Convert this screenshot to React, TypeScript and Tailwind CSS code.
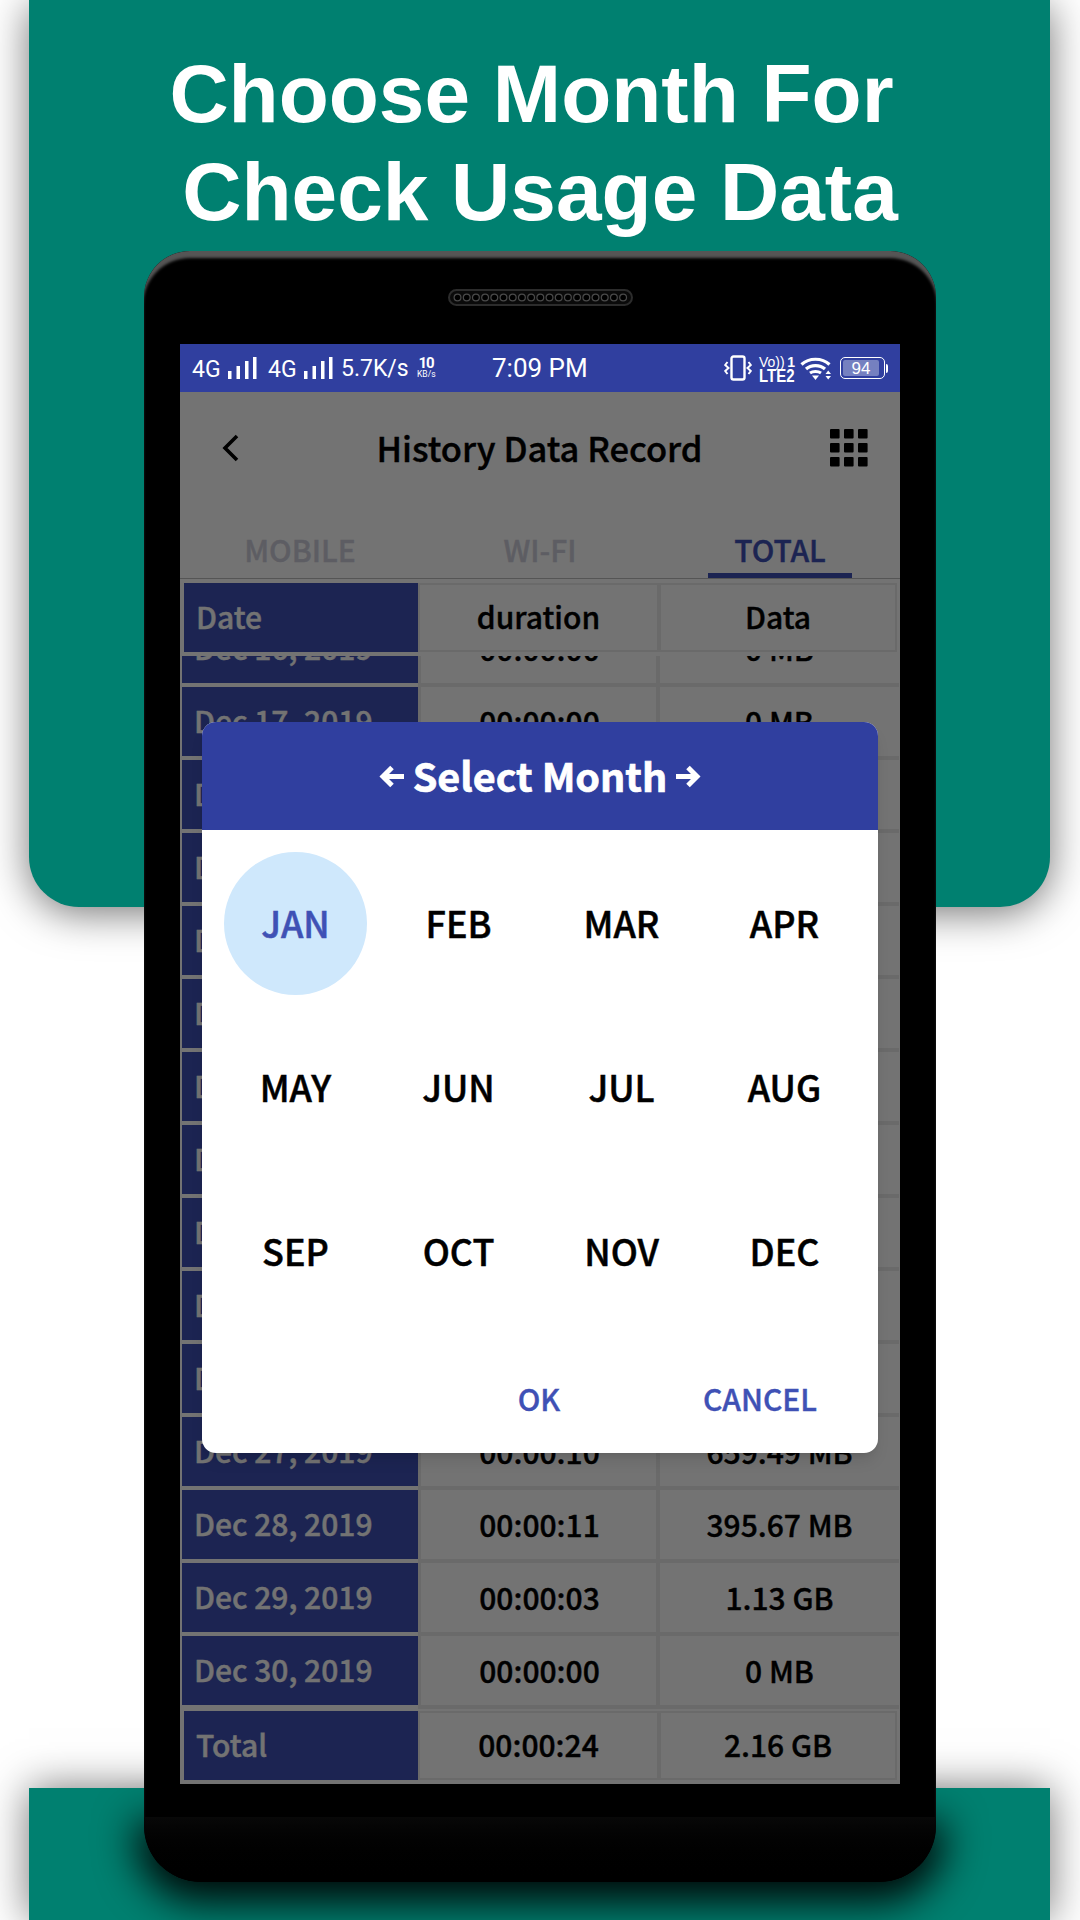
const dates = [16, 17, 18, 19, 20, 21, 22, 23, 24, 25, 26, 27, 28, 29, 30];

const rows: Record<number, [string, string]> = {
  27: ["00:00:10", "659.49 MB"],
  28: ["00:00:11", "395.67 MB"],
  29: ["00:00:03", "1.13 GB"],
};

const months = ["JAN", "FEB", "MAR", "APR", "MAY", "JUN", "JUL", "AUG", "SEP", "OCT", "NOV", "DEC"];

const cjk = "[font-family:'Noto_Sans_CJK_SC','Noto_Sans',sans-serif]";

function Bars() {
  return (
    <svg width="29" height="24" viewBox="0 0 29 24" fill="white">
      <rect x="0" y="15" width="3.5" height="8" />
      <rect x="8.5" y="10" width="3.5" height="13" />
      <rect x="17" y="5" width="3.5" height="18" />
      <rect x="25" y="1" width="3.5" height="22" />
    </svg>
  );
}

function StatusBar() {
  return (
    <div className="flex h-12 items-center bg-[#303f9f] pl-3 pr-3 font-['Roboto',sans-serif] text-white">
      <span className="w-[36px] pt-[3px] text-[23px] leading-none">4G</span>
      <Bars />
      <span className="ml-[11px] w-[36px] pt-[3px] text-[23px] leading-none">4G</span>
      <Bars />
      <span className="ml-[8px] w-[76px] text-[23px] leading-none">5.7K/s</span>
      <div className="flex w-[75px] flex-col items-start">
        <span className="w-[18px] text-center text-[15px] font-bold leading-[13px] tracking-[-1px]">10</span>
        <span className="w-[18px] whitespace-nowrap text-[8.5px] leading-[9px]">KB/s</span>
      </div>
      <span className="text-[26px] leading-none">7:09 PM</span>
      <div className="ml-auto flex items-center">
        <svg width="28" height="26" viewBox="0 0 28 26" fill="none" stroke="white" strokeWidth="2.4">
          <rect x="7.5" y="1.5" width="13" height="23" rx="2" />
          <path d="M3.5 7 L1.2 10 L4.5 13 L1.2 16 L3.5 19 M24.5 7 L26.8 10 L23.5 13 L26.8 16 L24.5 19" strokeWidth="2" />
        </svg>
        <div className="ml-[7px] flex w-[36px] flex-col font-['Liberation_Sans',sans-serif] leading-none">
          <span className="flex justify-between text-[14px] leading-[12px]">
            <span>Vo))</span>
            <span className="font-bold">1</span>
          </span>
          <span className="origin-top scale-y-[1.2] whitespace-nowrap text-[15px] font-bold leading-[13px]">LTE2</span>
        </div>
        <svg className="ml-[5px]" width="32" height="23" viewBox="0 0 32 23" fill="none" stroke="white" strokeWidth="3.2">
          <path d="M1.5 7.5 C9 0.5 22 0.5 29.5 7.5" />
          <path d="M6 12 C11 7.5 20 7.5 25 12" />
          <path d="M10 16 C13 14 18 14 21 16" />
          <path d="M12 18.5 L19 18.5 L15.5 23 Z" fill="white" stroke="none" />
          <path d="M25.5 17 L31 17 L28.2 13.5 Z M25.5 19 L31 19 L28.2 22.5 Z" fill="white" stroke="none" />
        </svg>
        <div className="ml-[8px] flex items-center">
          <div className="flex h-[22px] w-[45px] items-center rounded-[5px] border-[1.5px] border-white p-[2px]">
            <div className="flex h-full w-[36px] items-center justify-center rounded-[2px] bg-[#7580c0] font-['Liberation_Sans',sans-serif] text-[17px] leading-none">
              94
            </div>
          </div>
          <div className="ml-[1px] h-[9px] w-[2px] rounded-r-sm bg-white" />
        </div>
      </div>
    </div>
  );
}

function AppBar() {
  return (
    <div className="flex h-[112px] items-center justify-between pl-[42px] pr-[32px]">
      <svg width="17" height="28" viewBox="0 0 17 28" fill="none" stroke="black" strokeWidth="3.6">
        <path d="M15 2 L3 14 L15 26" />
      </svg>
      <span className="ml-[10px] pb-[2px] text-[34.5px] font-medium leading-none text-black [-webkit-text-stroke:0.4px_black]">History Data Record</span>
      <svg width="38" height="38" viewBox="0 0 38 38" fill="black">
        {[0, 14, 28].map((y) =>
          [0, 14, 28].map((x) => <rect key={`${x}-${y}`} x={x} y={y} width="9.6" height="9.6" rx="1" />),
        )}
      </svg>
    </div>
  );
}

function Tabs() {
  return (
    <div className="flex h-[75px] border-b border-[#bdbdbd]">
      <div className="flex w-[240px] items-start justify-center pt-[23px] text-[30px] font-medium leading-[44px] text-[#cfcfdb] [-webkit-text-stroke:0.4px_#cfcfdb]">MOBILE</div>
      <div className="flex w-[240px] items-start justify-center pt-[23px] text-[30px] font-medium leading-[44px] text-[#cfcfdb] [-webkit-text-stroke:0.4px_#cfcfdb]">WI-FI</div>
      <div className="flex w-[240px] justify-center">
        <div className="flex h-[74px] w-[144px] items-start justify-center border-b-[5px] border-[#3f51b5] pt-[23px] text-[30px] font-medium leading-[44px] text-[#3f51b5] [-webkit-text-stroke:0.4px_#3f51b5]">
          TOTAL
        </div>
      </div>
    </div>
  );
}

function DataRow({ date, time, data }: { date: string; time: string; data: string }) {
  return (
    <div className="ml-[2px] flex h-[73px] text-[30px] font-medium leading-none [-webkit-text-stroke:0.4px]">
      <div className="mb-[4px] flex w-[236px] items-center bg-[#3f51b5] pb-[3px] pl-[12px] text-white">{date}</div>
      <div className="flex w-[241px] items-center justify-center border-b-4 border-l-[3px] border-r-[3px] border-[#ececec] pb-[1px] pl-[2px] text-black">{time}</div>
      <div className="flex w-[240px] items-center justify-center border-b-4 border-l-[1px] border-[#ececec] pb-[1px] text-black">{data}</div>
    </div>
  );
}

function PinnedRow({ first, second, third, className }: { first: string; second: string; third: string; className: string }) {
  return (
    <div className={`ml-[4px] flex h-[69px] text-[30px] font-medium leading-none [-webkit-text-stroke:0.4px] ${className}`}>
      <div className="flex w-[234px] items-center bg-[#3f51b5] pb-[3px] pl-[12px] text-white">{first}</div>
      <div className="flex w-[241px] items-center justify-center border-2 border-[#ececec] pb-[3px] text-black">{second}</div>
      <div className="flex w-[238px] items-center justify-center border-2 border-[#ececec] pb-[3px] text-black">{third}</div>
    </div>
  );
}

function MonthDialog() {
  return (
    <div className="absolute left-[22px] top-[330px] flex h-[731px] w-[676px] flex-col overflow-hidden rounded-[14px] bg-white shadow-lg">
      <div className="flex h-[108px] items-center justify-center gap-[9px] bg-[#303f9f] text-[39.5px] font-bold leading-none text-white [-webkit-text-stroke:0.7px_white]">
        <svg width="25" height="23" viewBox="0 0 25 23" fill="none" stroke="white" strokeWidth="5">
          <path d="M13 2.5 L4 11.5 L13 20.5 M4 11.5 H25" />
        </svg>
        <span className="pb-[2px]">Select Month</span>
        <svg width="25" height="23" viewBox="0 0 25 23" fill="none" stroke="white" strokeWidth="5">
          <path d="M12 2.5 L21 11.5 L12 20.5 M21 11.5 H0" />
        </svg>
      </div>
      <div className="grid grid-cols-4 px-[12px] pt-[11px]">
        {months.map((m) => (
          <div key={m} className="flex h-[164px] items-center justify-center">
            <div
              className={
                m === "JAN"
                  ? "flex h-[143px] w-[143px] items-center justify-center rounded-full bg-[#cfe8fc] pb-[2px] text-[36px] font-medium text-[#3f51b5] [-webkit-text-stroke:0.5px_#3f51b5]"
                  : "flex h-[143px] w-[143px] items-center justify-center pb-[2px] text-[36px] font-medium text-black [-webkit-text-stroke:0.5px_black]"
              }
            >
              {m}
            </div>
          </div>
        ))}
      </div>
      <div className="flex items-center pt-[50px] text-[30px] font-medium leading-none text-[#3f51b5] [-webkit-text-stroke:0.4px_#3f51b5]">
        <span className="ml-[312px] w-[50px] text-center">OK</span>
        <span className="ml-[138px] w-[116px] text-center">CANCEL</span>
      </div>
    </div>
  );
}

export default function App() {
  return (
    <div className="relative flex h-[1920px] w-[1080px] flex-col items-center overflow-hidden bg-white">
      <div className="absolute left-[29px] top-0 h-[907px] w-[1021px] rounded-b-[50px] bg-[#008070] shadow-[0_6px_40px_rgba(0,0,0,0.55)]" />
      <div className="absolute left-[29px] top-[1788px] h-[132px] w-[1021px] bg-[#008070] shadow-[0_0_40px_rgba(0,0,0,0.55)]" />

      <div className="relative flex h-[251px] w-full flex-col items-center pt-[45px] font-['Liberation_Sans',sans-serif] text-[82px] font-bold leading-[98px] text-white">
        <div className="pr-[17px]">Choose Month For</div>
        <div>Check Usage Data</div>
      </div>

      <div className="relative flex h-[1631px] w-[792px] flex-col items-center rounded-t-[46px] rounded-b-[56px] bg-black shadow-[inset_0_8px_3px_-1px_#555]">
        <div className="mt-[38px] flex h-[17px] w-[185px] items-center rounded-full border-2 border-[#2c2c2c] bg-[#0a0a0a] px-[3px]">
          <svg width="175" height="9" viewBox="0 0 175 9" fill="#000" stroke="#4a4a4a" strokeWidth="1.2">
            {Array.from({ length: 19 }).map((_, i) => (
              <circle key={i} cx={4.5 + i * 9.2} cy="4.5" r="3.4" />
            ))}
          </svg>
        </div>

        <div className={`mt-[38px] flex h-[1440px] w-[720px] flex-col ${cjk}`}>
          <StatusBar />
          <div className="relative flex flex-1 flex-col overflow-hidden bg-white">
            <AppBar />
            <Tabs />
            <PinnedRow first="Date" second="duration" third="Data" className="mt-[4px]" />
            <div className="mt-[4px] h-[1053px] overflow-hidden">
              <div className="-mt-[42px]">
                {dates.map((d) => {
                  const [time, data] = rows[d] ?? ["00:00:00", "0 MB"];
                  return <DataRow key={d} date={`Dec ${d}, 2019`} time={time} data={data} />;
                })}
              </div>
            </div>
            <PinnedRow first="Total" second="00:00:24" third="2.16 GB" className="mt-[2px]" />
            <div className="absolute inset-0 bg-black/55" />
            <MonthDialog />
          </div>
        </div>

        <div className="mt-[33px] h-[65px] w-full rounded-b-[56px] bg-gradient-to-b from-[#080808] to-black shadow-[0_12px_40px_8px_rgba(0,0,0,0.95)]" />
      </div>
    </div>
  );
}
